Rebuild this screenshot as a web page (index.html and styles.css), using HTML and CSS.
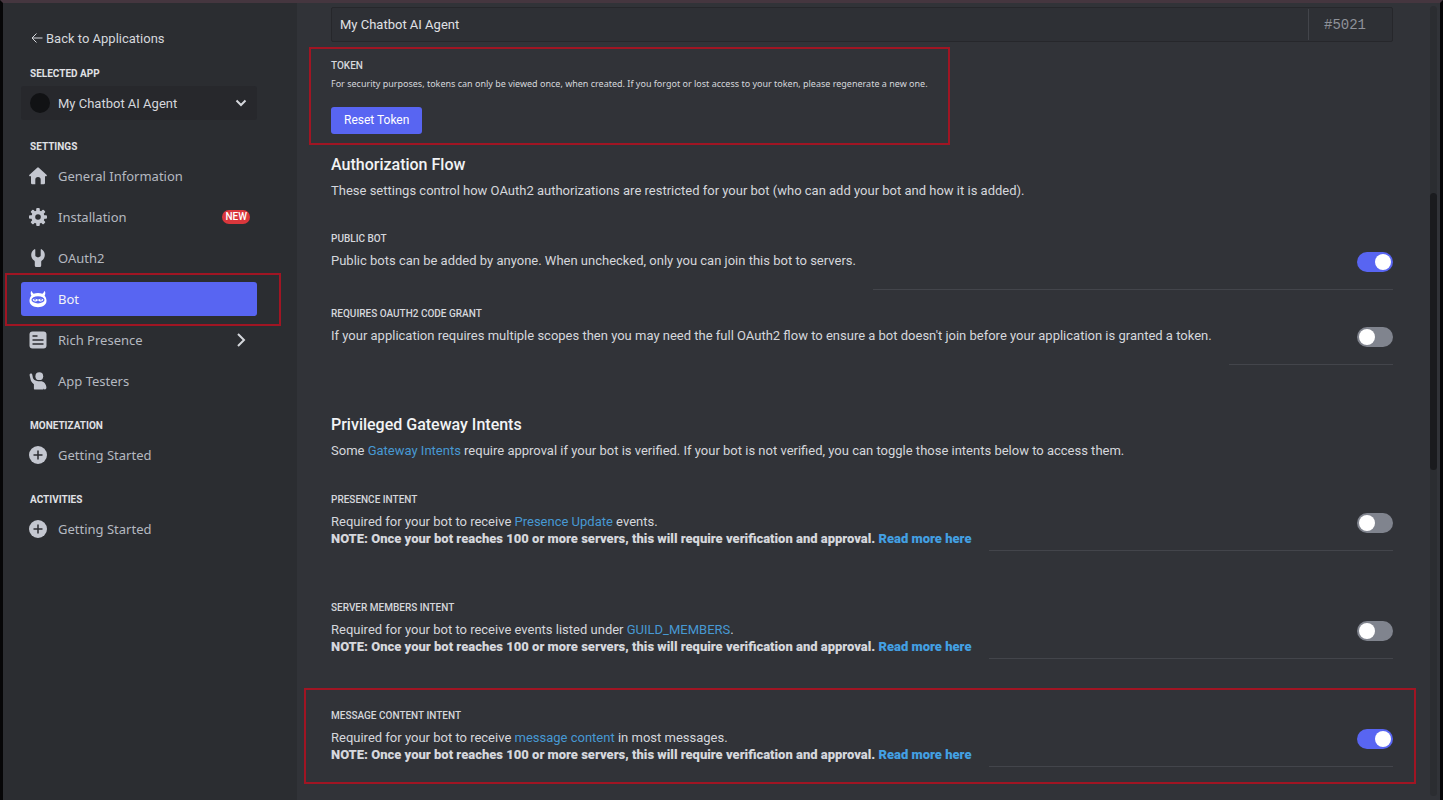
FILE: index.html
```html
<!DOCTYPE html>
<html lang="en">
<head>
  <meta charset="UTF-8" />
  <meta name="viewport" content="width=device-width, initial-scale=1.0" />
  <title>Bot settings</title>
  <link rel="stylesheet" href="styles.css">
</head>
<body>
  <aside class="sidebar">
    <a class="back-link" href="#">
      <svg class="back-arrow" viewBox="0 0 12 12"><path d="M11.500 6H1M5.500 1.500L1 6l4.500 4.500" /></svg>
      Back to Applications
    </a>

    <label class="group-title" for="appSelect">SELECTED APP</label>
    <div class="app-picker">
      <span class="avatar"></span>
      <select id="appSelect">
        <option>My Chatbot AI Agent</option>
      </select>
      <svg class="chevron" viewBox="0 0 12 12"><path d="M1.500 3.500L6 8l4.500-4.500" /></svg>
    </div>

    <nav>
      <section class="nav-group">
        <h3 class="group-title">SETTINGS</h3>
        <a class="nav-item" href="#">
          <svg class="icon" viewBox="0 0 18 18"><path d="M8.200.7a1.200 1.200 0 0 1 1.600 0l7.700 7a.9.900 0 0 1-.6 1.600H16v6.700a1.300 1.300 0 0 1-1.300 1.300h-3v-4.500a2.700 2.700 0 0 0-5.400 0v4.500h-3A1.300 1.300 0 0 1 2 16V9.300h-.9a.9.900 0 0 1-.6-1.600z" /></svg>
          General Information
        </a>
        <a class="nav-item" href="#">
          <svg class="icon" viewBox="0 0 18 18">
            <g>
              <rect x="7.200" y="0" width="3.600" height="18" rx="1" />
              <rect x="7.200" y="0" width="3.600" height="18" rx="1" transform="rotate(45 9 9)" />
              <rect x="7.200" y="0" width="3.600" height="18" rx="1" transform="rotate(90 9 9)" />
              <rect x="7.200" y="0" width="3.600" height="18" rx="1" transform="rotate(135 9 9)" />
              <circle cx="9" cy="9" r="6.600" />
            </g>
            <circle class="icon-hole" cx="9" cy="9" r="2.800" />
          </svg>
          Installation
          <span class="badge">NEW</span>
        </a>
        <a class="nav-item" href="#">
          <svg class="icon" viewBox="0 0 18 18"><path d="M6.300.6v5.900a1 1 0 0 0 .5.900l1.700.9a1 1 0 0 0 1 0l1.700-.9a1 1 0 0 0 .5-.9V.6a.5.500 0 0 1 .8-.4 6.800 6.800 0 0 1 .4 11.400 1.500 1.500 0 0 0-.7 1.200v3.700A1.500 1.500 0 0 1 10.700 18H7.300a1.500 1.500 0 0 1-1.500-1.500v-3.700a1.500 1.500 0 0 0-.7-1.200A6.800 6.800 0 0 1 5.500.2a.5.500 0 0 1 .8.4z" /></svg>
          OAuth2
        </a>
        <a class="nav-item active" href="#">
          <svg class="icon" viewBox="0 0 18 18">
            <path d="M2 1.500c.2-.5.700-.5.900 0 .2 1 .8 1.800 1.700 2.300 2.700-1.200 6.100-1.200 8.800 0 .9-.5 1.500-1.300 1.700-2.300.2-.5.700-.5.900 0 .5 1.500.4 3-.4 4.200 1.200 1.400 1.900 3.200 1.900 5.100 0 4-3.700 6.400-8.500 6.400S.5 14.800.5 10.800c0-1.900.7-3.700 1.900-5.100-.8-1.200-.9-2.700-.4-4.200z" />
            <ellipse class="icon-hole" cx="9" cy="9.800" rx="6.500" ry="3.600" />
            <path d="M3.600 9.600c1.500-1.200 3.300-1.200 4.300-.3.600.5 1.600.5 2.200 0 1-.9 2.800-.9 4.300.3-.5 1.800-2.900 2.500-4.300 1.300-.6-.5-1.600-.5-2.200 0-1.400 1.200-3.800.5-4.300-1.300z" />
            <path class="icon-line" d="M5 9.800h2M11 9.800h2" />
          </svg>
          Bot
        </a>
        <a class="nav-item" href="#">
          <svg class="icon" viewBox="0 0 18 18">
            <rect x="0.500" y="0.500" width="17" height="17" rx="3" />
            <path class="icon-line" d="M3.500 5h5M3.500 9h11M3.500 13h11" />
          </svg>
          Rich Presence
          <svg class="chevron chevron-right" viewBox="0 0 12 12"><path d="M3 0l6 6-6 6" /></svg>
        </a>
        <a class="nav-item" href="#">
          <svg class="icon" viewBox="0 0 18 18">
            <circle cx="10.300" cy="4.200" r="3.900" />
            <path d="M1.200 1.800c1-.5 1.900 0 2.100 1l.6 2.900c.2 1 .7 1.800 1.600 2.400 1 .7 2.200 1.100 3.600 1.100h2.500c3.300 0 5.500 2.600 5.800 6.100.1 1.300-.6 2.200-1.500 2.200-.6 0-.7-.2-1.100-1l-.5 1H5.900c-.6 0-1-.4-1-1v-4.300C2.800 10.800 1.900 9 1.400 6.700L.6 3.200c-.1-.6.100-1.100.6-1.400z" />
          </svg>
          App Testers
        </a>
      </section>

      <section class="nav-group">
        <h3 class="group-title">MONETIZATION</h3>
        <a class="nav-item" href="#">
          <svg class="icon" viewBox="0 0 18 18"><circle cx="9" cy="9" r="9" /><path class="icon-line" d="M9 4.500v9M4.500 9h9" /></svg>
          Getting Started
        </a>
      </section>

      <section class="nav-group">
        <h3 class="group-title">ACTIVITIES</h3>
        <a class="nav-item" href="#">
          <svg class="icon" viewBox="0 0 18 18"><circle cx="9" cy="9" r="9" /><path class="icon-line" d="M9 4.500v9M4.500 9h9" /></svg>
          Getting Started
        </a>
      </section>
    </nav>
  </aside>

  <main class="main-content">
    <div class="username-field">
      <input type="text" value="My Chatbot AI Agent" aria-label="Username" />
      <span class="tag">#5021</span>
    </div>

    <section class="token">
      <h3 class="label">TOKEN</h3>
      <p class="small">For security purposes, tokens can only be viewed once, when created. If you forgot or lost access to your token, please regenerate a new one.</p>
      <button type="button">Reset Token</button>
    </section>

    <section class="auth-flow">
      <h2>Authorization Flow</h2>
      <p>These settings control how OAuth2 authorizations are restricted for your bot (who can add your bot and how it is added).</p>

      <div class="setting">
        <div class="setting-text">
          <label class="label" for="publicBot">PUBLIC BOT</label>
          <p>Public bots can be added by anyone. When unchecked, only you can join this bot to servers.</p>
        </div>
        <div class="setting-control"><input type="checkbox" class="switch" id="publicBot" checked /></div>
      </div>

      <div class="setting">
        <div class="setting-text">
          <label class="label" for="codeGrant">REQUIRES OAUTH2 CODE GRANT</label>
          <p>If your application requires multiple scopes then you may need the full OAuth2 flow to ensure a bot doesn't join before your application is granted a token.</p>
        </div>
        <div class="setting-control"><input type="checkbox" class="switch" id="codeGrant" /></div>
      </div>
    </section>

    <section class="intents">
      <h2>Privileged Gateway Intents</h2>
      <p>Some <a href="#">Gateway Intents</a> require approval if your bot is verified. If your bot is not verified, you can toggle those intents below to access them.</p>

      <div class="setting">
        <div class="setting-text">
          <label class="label" for="presenceIntent">PRESENCE INTENT</label>
          <p>Required for your bot to receive <a href="#">Presence Update</a> events.</p>
          <p class="note">NOTE: Once your bot reaches 100 or more servers, this will require verification and approval. <a href="#">Read more here</a></p>
        </div>
        <div class="setting-control"><input type="checkbox" class="switch" id="presenceIntent" /></div>
      </div>

      <div class="setting">
        <div class="setting-text">
          <label class="label" for="membersIntent">SERVER MEMBERS INTENT</label>
          <p>Required for your bot to receive events listed under <a href="#">GUILD_MEMBERS</a>.</p>
          <p class="note">NOTE: Once your bot reaches 100 or more servers, this will require verification and approval. <a href="#">Read more here</a></p>
        </div>
        <div class="setting-control"><input type="checkbox" class="switch" id="membersIntent" /></div>
      </div>

      <div class="setting marked">
        <div class="setting-text">
          <label class="label" for="messageIntent">MESSAGE CONTENT INTENT</label>
          <p>Required for your bot to receive <a href="#">message content</a> in most messages.</p>
          <p class="note">NOTE: Once your bot reaches 100 or more servers, this will require verification and approval. <a href="#">Read more here</a></p>
        </div>
        <div class="setting-control"><input type="checkbox" class="switch" id="messageIntent" checked /></div>
      </div>
    </section>

    <div class="scroll-track"><div class="scroll-thumb"></div></div>
  </main>
</body>
</html>
```
FILE: styles.css
```css
:root {
  --bg-side: #2b2d31;
  --bg-main: #313338;
  --bg-input: #2e3035;
  --blurple: #5865f2;
  --text: #d5d7dc;
  --text-muted: #b5b9c0;
  --link: #4799d3;
  --line: #43454b;
  --mark: #a01523;
}
* { box-sizing: border-box; margin: 0; padding: 0; }
body {
  display: flex;
  height: 100vh;
  overflow: hidden;
  border: 3px solid #060607;
  border-top-color: #45363f;
  border-bottom: none;
  font: 13px/17px Roboto, sans-serif;
  background: var(--bg-main);
  color: var(--text);
}
a { color: var(--link); text-decoration: none; }
input, select, button { font: inherit; color: inherit; border: none; outline: none; }

/* sidebar */
.sidebar {
  width: 294px;
  flex-shrink: 0;
  padding: 27px 40px 0 18px;
  background: var(--bg-side);
}
.back-link {
  display: flex;
  align-items: center;
  gap: 3px;
  height: 16px;
  margin: 0 0 19px 10px;
  color: var(--text);
}
.back-arrow { width: 12px; height: 12px; fill: none; stroke: currentColor; }
.group-title {
  display: block;
  margin: 0 0 3px 9px;
  font-size: 10px;
  line-height: 18px;
  font-weight: 700;
  color: #e0e1e5;
}
.app-picker {
  display: flex;
  align-items: center;
  height: 34px;
  margin-bottom: 18px;
  padding: 0 10px 0 9px;
  border-radius: 3px;
  background: #27282c;
}
.avatar {
  width: 20px;
  height: 20px;
  border-radius: 50%;
  background: #111214;
}
.app-picker select {
  flex: 1;
  margin-left: 8px;
  appearance: none;
  background: transparent;
}
.chevron {
  width: 12px;
  height: 12px;
  overflow: visible;
  fill: none;
  stroke: #d5d7dc;
  stroke-width: 2;
  pointer-events: none;
}
.chevron-right { margin-left: auto; }
.nav-group { display: flex; flex-direction: column; gap: 7px; margin-bottom: 19px; }
.nav-group .group-title { margin-bottom: -4px; }
.nav-item {
  display: flex;
  align-items: center;
  gap: 11px;
  height: 34px;
  padding: 0 10px 0 8px;
  border-radius: 3px;
  font-family: 'Noto Sans', sans-serif;
  color: var(--text-muted);
}
.icon { width: 18px; height: 18px; fill: #c4c7d0; }
.icon-hole { fill: var(--bg-side); }
.icon-line { fill: none; stroke: var(--bg-side); stroke-width: 1.5; }
.nav-item.active { position: relative; background: var(--blurple); color: #f2f3f5; }
.active .icon { fill: #fff; }
.active .icon-hole { fill: var(--blurple); }
.active .icon-line { stroke: var(--blurple); stroke-width: 1; }
.badge {
  margin: 0 -3px 0 auto;
  padding: 0 3px;
  border-radius: 7px;
  font: 500 10px/14px Roboto, sans-serif;
  background: #da373c;
  color: #fff;
}

/* red outlines laid over the page */
.nav-item.active::after, .token::after, .marked::after {
  content: '';
  position: absolute;
  border: 2px solid var(--mark);
  pointer-events: none;
}
.nav-item.active::after { inset: -9px -24px -10px -16px; }
.token::after { inset: -10px -22px -11px; }
.marked::after { inset: -19px -23px -17px -27px; }

/* main column */
.main-content {
  position: relative;
  flex: 1;
  padding: 4px 47px 0 34px;
}
.username-field {
  display: flex;
  height: 35px;
  border: 1px solid #26272b;
  border-radius: 2px;
  background: var(--bg-input);
}
.username-field input { flex: 1; padding: 0 8px; background: transparent; color: #e0e1e5; }
.tag {
  width: 84px;
  margin: 1px 0;
  padding-left: 15px;
  border-left: 1px solid #43454b;
  font: 14px/32px 'Liberation Mono', monospace;
  color: #8f929a;
}
.label {
  display: block;
  font-size: 10px;
  line-height: 18px;
  font-weight: 500;
  color: var(--text);
}
.token { position: relative; width: fit-content; margin: 15px 0 20px; }
.small { font: 9px/18px 'Noto Sans', sans-serif; }
.token button {
  height: 27px;
  margin-top: 14px;
  padding: 0 13px;
  border-radius: 3px;
  font-size: 12px;
  background: var(--blurple);
  color: #fff;
}
h2 {
  margin-bottom: 6px;
  font-size: 16px;
  line-height: 22px;
  font-weight: 500;
  color: #f2f3f5;
}
.setting { position: relative; display: flex; gap: 17px; height: 60px; }
.setting-text .label { margin-bottom: 4px; }
.setting-control {
  flex: 1;
  padding-top: 22px;
  border-bottom: 1px solid var(--line);
  text-align: right;
}
.auth-flow .setting { margin-top: 15px; }
.auth-flow h2 + p + .setting { margin-top: 31px; }
.intents { margin-top: 49px; }
.intents .setting { margin-top: 48px; }
.intents h2 + p + .setting { margin-top: 32px; }
.note { font-weight: 900; }
.note a { color: #43a0e3; }

.switch {
  display: inline-flex;
  align-items: center;
  width: 36px;
  height: 20px;
  padding: 0 2px;
  appearance: none;
  border-radius: 10px;
  background: #80848e;
  cursor: pointer;
}
.switch::before {
  content: '';
  width: 16px;
  height: 16px;
  border-radius: 50%;
  background: #fff;
}
.switch:checked { justify-content: flex-end; background: var(--blurple); }

.scroll-track {
  position: absolute;
  top: 3px;
  right: 3px;
  bottom: 4px;
  width: 7px;
  border-radius: 4px;
  background: var(--bg-side);
}
.scroll-thumb {
  height: 35%;
  margin-top: 187px;
  border-radius: 4px;
  background: #1a1b1e;
}
```
